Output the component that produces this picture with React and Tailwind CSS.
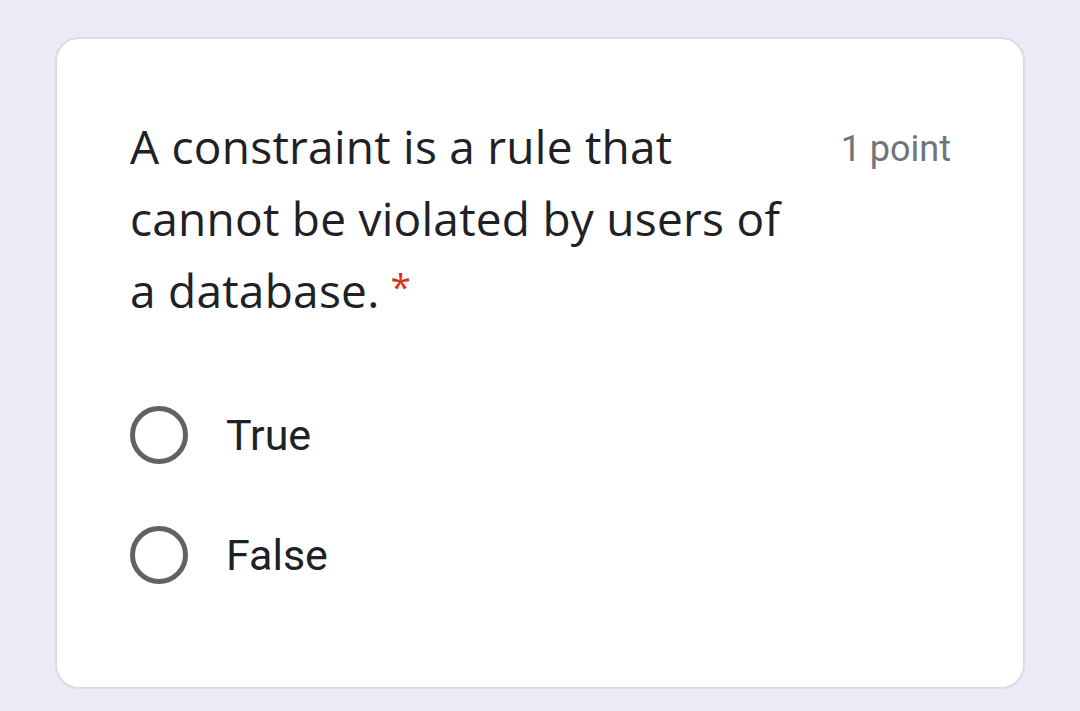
export default function App() {
  return (
    <div className="w-[1080px] h-[711px] bg-[#ede9f7] pt-[37px] pl-[55px] overflow-hidden">
      <div className="w-[970px] h-[652px] bg-white border-2 border-[#dadce0] rounded-[24px] pl-[73px] pr-[72px] pt-[110px]">
        <div className="flex justify-between items-start">
          <div className="w-[700px] text-[#202124] text-[46px] leading-[72px] tracking-[0.25px] mt-[-39px]" style={{ fontFamily: '"Open Sans", sans-serif' }}>
            A constraint is a rule that<br />
            cannot be violated by users of<br />
            a database.<span className="relative -top-[8px] text-[#d93025] text-[37px] leading-none ml-[11px]">*</span>
          </div>
          <div className="text-[#70757a] text-[36px] leading-[36px] mt-[-18px]" style={{ fontFamily: 'Roboto, sans-serif' }}>1 point</div>
        </div>
        <div className="mt-[80px] flex flex-col gap-[62px]" style={{ fontFamily: 'Roboto, sans-serif' }}>
          <div className="flex items-center">
            <div className="w-[58px] h-[58px] rounded-full border-[5px] border-[#5f6368]" />
            <span className="ml-[38px] text-[43px] leading-[58px] text-[#202124]">True</span>
          </div>
          <div className="flex items-center">
            <div className="w-[58px] h-[58px] rounded-full border-[5px] border-[#5f6368]" />
            <span className="ml-[38px] text-[43px] leading-[58px] text-[#202124]">False</span>
          </div>
        </div>
      </div>
    </div>
  );
}
